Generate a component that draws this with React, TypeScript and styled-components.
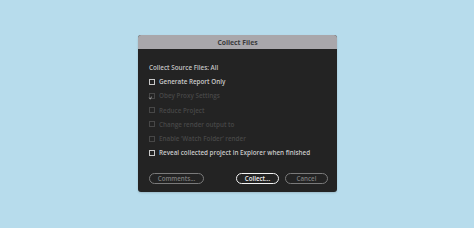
import React from 'react';
import styled, { createGlobalStyle, css } from 'styled-components';

const GlobalStyle = createGlobalStyle`
    html, body {
        margin: 0;
        padding: 0;
        background: #b7dcec;
        font-family: "Open Sans", "Noto Sans", sans-serif;
    }
`;

const Page = styled.div`
    width: 474px;
    height: 228px;
    display: flex;
    align-items: flex-start;
    padding: 35px 0 0 138px;
    box-sizing: border-box;
`;

const Dialog = styled.div`
    width: 199px;
    height: 157px;
    background: #232323;
    border-radius: 3px;
    overflow: hidden;
    display: flex;
    flex-direction: column;
    box-shadow: 0 1px 2px rgba(0, 0, 0, 0.15);
`;

const TitleBar = styled.div`
    height: 14px;
    background: #a9a7ab;
    color: #3b3b3d;
    font-size: 6.8px;
    font-weight: 700;
    display: flex;
    align-items: center;
    justify-content: center;
`;

const Body = styled.div`
    flex: 1;
    display: flex;
    flex-direction: column;
    padding: 13px 9px 8px 11px;
`;

const Heading = styled.div`
    color: #c4c4c4;
    font-size: 6.3px;
    font-weight: 600;
    height: 10px;
    display: flex;
    align-items: center;
    margin-bottom: 4.5px;
`;

const Options = styled.div`
    display: flex;
    flex-direction: column;
    gap: 4.3px;
`;

const Row = styled.div<{ disabled?: boolean }>`
    height: 10px;
    display: flex;
    align-items: center;
    gap: 4px;
    font-size: 6.3px;
    font-weight: 600;
    color: ${p => (p.disabled ? '#474747' : '#c9c9c9')};
`;

const Box = styled.span<{ disabled?: boolean }>`
    width: 6px;
    height: 6px;
    flex: none;
    display: inline-flex;
    ${p => css`
        color: ${p.disabled ? '#474747' : '#c9c9c9'};
    `}
`;

const Footer = styled.div`
    margin-top: auto;
    display: flex;
    align-items: center;
    gap: 6px;
`;

const Button = styled.button<{ primary?: boolean; $width: number }>`
    width: ${p => p.$width}px;
    height: 11px;
    padding: 0;
    border-radius: 6px;
    background: transparent;
    font-family: inherit;
    font-size: 6.2px;
    font-weight: 600;
    display: flex;
    align-items: center;
    justify-content: center;
    box-sizing: border-box;
    border: 1px solid ${p => (p.primary ? '#f2f2f2' : '#7a7a7a')};
    color: ${p => (p.primary ? '#f2f2f2' : '#7c7c7c')};
`;

const Spacer = styled.div`
    flex: 1;
`;

function CheckBox({ checked, disabled }: { checked?: boolean; disabled?: boolean }) {
    return (
        <Box disabled={disabled}>
            <svg width="6" height="6" viewBox="0 0 6 6" overflow="visible">
                <rect x="0.5" y="0.5" width="5" height="5" fill="none" stroke="currentColor" strokeWidth="1" />
                {checked && (
                    <path d="M0.2 4.6 L1.3 6.2 L2.6 3.6" fill="none" stroke="#9a9a9a" strokeWidth="0.9" />
                )}
            </svg>
        </Box>
    );
}

const options = [
    { label: 'Generate Report Only' },
    { label: 'Obey Proxy Settings', disabled: true, checked: true },
    { label: 'Reduce Project', disabled: true },
    { label: 'Change render output to', disabled: true },
    { label: 'Enable \u2018Watch Folder\u2019 render', disabled: true },
    { label: 'Reveal collected project in Explorer when finished' },
];

export default function App() {
    return (
        <>
            <GlobalStyle />
            <Page>
                <Dialog>
                    <TitleBar>Collect Files</TitleBar>
                    <Body>
                        <Heading>Collect Source Files: All</Heading>
                        <Options>
                            {options.map(o => (
                                <Row key={o.label} disabled={o.disabled}>
                                    <CheckBox checked={o.checked} disabled={o.disabled} />
                                    {o.label}
                                </Row>
                            ))}
                        </Options>
                        <Footer>
                            <Button $width={55}>Comments...</Button>
                            <Spacer />
                            <Button primary $width={43}>Collect...</Button>
                            <Button $width={43}>Cancel</Button>
                        </Footer>
                    </Body>
                </Dialog>
            </Page>
        </>
    );
}
